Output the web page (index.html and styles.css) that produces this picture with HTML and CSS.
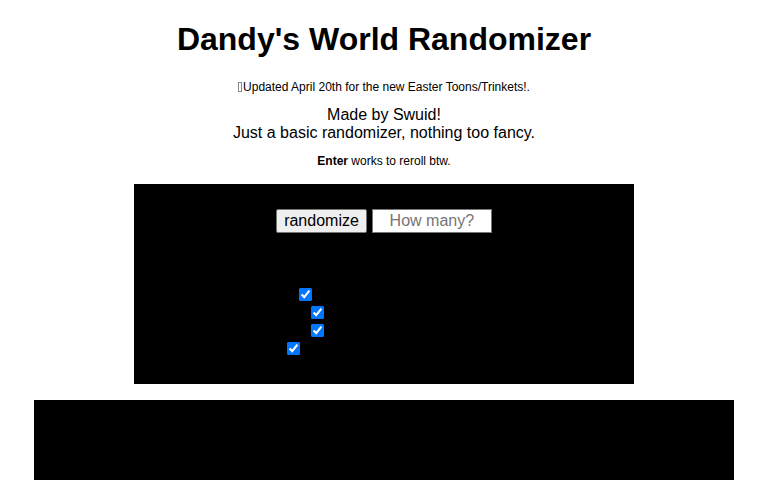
FILE: index.html
```html
<!DOCTYPE html>
<html lang="en">
<head>
<meta charset="utf-8">
<title>Dandy's World Randomizer</title>
<link rel="stylesheet" href="styles.css">
</head>
<body>
  <h1 class="title">Dandy's World Randomizer</h1>
  <p class="note"><span class="glyph"></span>Updated April 20th for the new Easter Toons/Trinkets!.</p>
  <div class="intro">Made by Swuid!<br>Just a basic randomizer, nothing too fancy.</div>
  <p class="note"><b>Enter</b> works to reroll btw.</p>

  <section class="panel">
    <div class="controls">
      <button class="roll" type="button">randomize</button>
      <input class="count" type="text" placeholder="How many?">
    </div>
    <div class="options">
      <label class="opt"><input type="checkbox" checked>Include Regular Toons</label>
      <label class="opt"><input type="checkbox" checked>Include All Trinkets</label>
      <label class="opt"><input type="checkbox" checked>Include Old Events</label>
      <label class="opt"><input type="checkbox" checked>Allow Duplicates of Toons</label>
    </div>
  </section>

  <section class="results"></section>
</body>
</html>
```
FILE: styles.css
```css
body {
  margin: 0;
  font-family: "Liberation Sans", Arial, sans-serif;
  color: #000;
  background: #fff;
  text-align: center;
}

.title {
  font-size: 32px;
  font-weight: bold;
  margin: 21px 0 22px;
  line-height: 37px;
}

.note {
  font-size: 12px;
  line-height: 14px;
  margin: 12px 0;
}

/* small placeholder box drawn in front of the update note */
.glyph {
  display: inline-block;
  width: 2px;
  height: 8px;
  border: 1px solid #8a8a8a;
  margin-right: 1px;
  vertical-align: -1px;
}

.intro {
  font-size: 16px;
  line-height: 18px;
}

.panel {
  width: 500px;
  height: 200px;
  margin: 16px auto 0;
  background: #000;
  color: #000;
  padding-top: 25px;
  box-sizing: border-box;
}

.controls {
  display: flex;
  justify-content: center;
  gap: 5px;
}

.roll {
  font-family: "Liberation Sans", Arial, sans-serif;
  font-size: 16px;
  height: 24px;
  padding: 0 7px;
  background: #efefef;
  border: 1px solid #767676;
  border-radius: 2px;
  color: #000;
}

.count {
  font-family: "Liberation Sans", Arial, sans-serif;
  font-size: 16px;
  width: 120px;
  height: 24px;
  box-sizing: border-box;
  border: 1px solid #767676;
  text-align: center;
  padding: 0 4px;
  background: #fff;
}

.count::placeholder {
  color: #757575;
}

.options {
  margin-top: 52px;
  display: flex;
  flex-direction: column;
  align-items: center;
  font-size: 16px;
  line-height: 18px;
}

.opt {
  display: flex;
  align-items: center;
  height: 18px;
}

.opt input {
  width: 13px;
  height: 13px;
  margin: 3px 3px 3px 4px;
}

.results {
  width: 700px;
  height: 200px;
  margin: 16px auto 0;
  background: #000;
}
```
